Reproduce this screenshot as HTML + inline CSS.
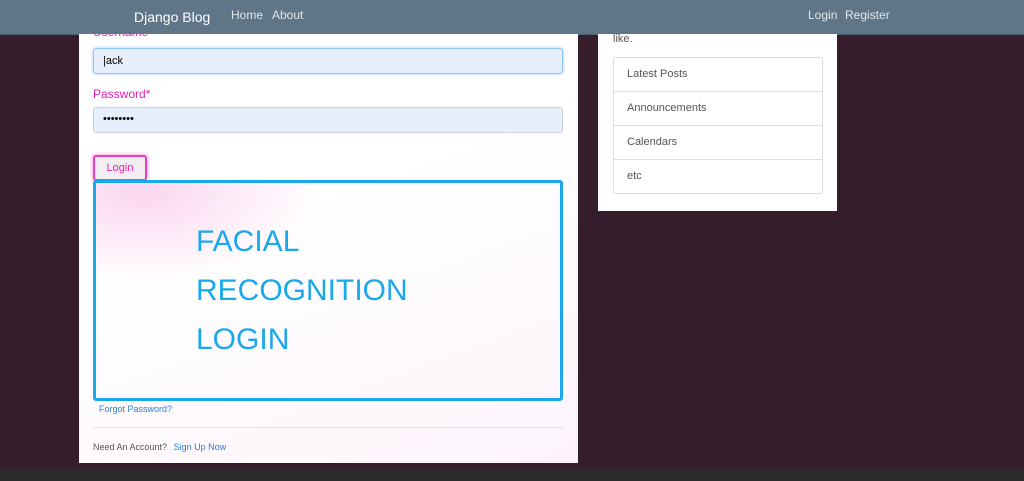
<!DOCTYPE html>
<html><head><style>
body{margin:0;width:1024px;height:481px;overflow:hidden;background:#361d2c;font-family:"Liberation Sans","DejaVu Sans",sans-serif;position:relative}
.nav{position:absolute;left:0;top:0;width:1024px;height:34px;background:#5f7689;border-bottom:1px solid #4e6272}
.nav span{position:absolute;top:8px;color:#dfe6ea;font-size:12px}
.card{position:absolute;left:79px;top:34px;width:499px;height:429px;background:#fff;background:linear-gradient(160deg,#fff 40%,#fdf4fb 100%);overflow:hidden}
.side{position:absolute;left:598px;top:34px;width:239px;height:177px;background:#fff}
.lbl{position:absolute;color:#e61eb4;font-size:12px}
.inp{position:absolute;left:14px;width:468px;height:24px;background:#e8effc;border:1px solid #c9d3de;border-radius:3px;font-size:11px}
.list{position:absolute;left:15px;width:208px;border:1px solid #ddd;border-radius:3px;top:23px}
.list div{height:33px;border-bottom:1px solid #ddd;font-size:11px;color:#555;line-height:33px;padding-left:13px}
.list div:last-child{border-bottom:none}
.task{position:absolute;left:0;top:470px;width:1024px;height:11px;background:#2b2b2b}
</style></head><body>
<div class="nav"><span style="left:134px;font-size:14px;color:#fff;top:9px">Django Blog</span><span style="left:231px">Home</span><span style="left:272px">About</span><span style="left:808px">Login</span><span style="left:845px">Register</span></div>
<div class="card">
<div class="lbl" style="left:14px;top:-9px">Username</div>
<div class="inp" style="top:14px;border-color:#8ec3f5;box-shadow:0 0 3px #9cc8f5;"><span style="position:absolute;left:9px;top:6px">|ack</span></div>
<div class="lbl" style="left:14px;top:53px">Password*</div>
<div class="inp" style="top:73px"><span style="position:absolute;left:9px;top:5px">••••••••</span></div>
<div style="position:absolute;left:14px;top:121px;width:50px;height:22px;border:2px solid #f03cc0;border-radius:3px;box-shadow:0 0 5px #f58ad8;background:#f3eef2;color:#e61eb4;font-size:11px;text-align:center;line-height:22px">Login</div>
<div style="position:absolute;left:14px;top:146px;width:464px;height:215px;border:3px solid #1aa8ec;border-radius:3px;background:radial-gradient(ellipse at 10% 5%,#fbd6f0 0%,rgba(255,255,255,0) 30%)">
<div style="position:absolute;left:100px;top:34px;color:#1aa8ec;font-size:30px;line-height:49px">FACIAL<br>RECOGNITION<br>LOGIN</div></div>
<div style="position:absolute;left:20px;top:370px;font-size:9px;color:#2a7fd4">Forgot Password?</div>
<div style="position:absolute;left:14px;top:393px;width:471px;height:1px;background:#e3e3e8"></div>
<div style="position:absolute;left:14px;top:408px;font-size:9px;color:#555">Need An Account? <span style="color:#2a7fd4;margin-left:4px">Sign Up Now</span></div>
</div>
<div class="side"><div style="position:absolute;left:15px;top:-1px;font-size:11px;color:#555">like.</div>
<div class="list"><div>Latest Posts</div><div>Announcements</div><div>Calendars</div><div>etc</div></div></div>
<div class="task"></div>
</body></html>
